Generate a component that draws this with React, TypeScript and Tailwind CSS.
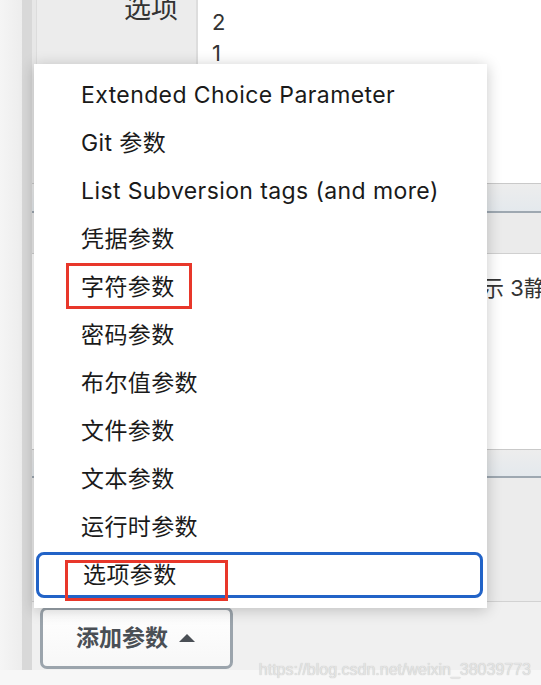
import { useState } from 'react'

const FONT = 'font-["Inter","Noto_Sans_CJK_SC",sans-serif]'

const ITEMS = [
  'Extended Choice Parameter',
  'Git 参数',
  'List Subversion tags (and more)',
  '凭据参数',
  '字符参数',
  '密码参数',
  '布尔值参数',
  '文件参数',
  '文本参数',
  '运行时参数',
  '选项参数',
]

function Separator({ height }: { height: string }) {
  return (
    <>
      <div className="h-px bg-[#c9c9c9]" />
      <div className={`${height} bg-gradient-to-b from-[#ededed] to-[#e4e9ed]`} />
      <div className="h-[2px] bg-[#9ea8b1]" />
    </>
  )
}

export default function App() {
  const [focused] = useState(ITEMS.length - 1)

  return (
    <div className={`relative w-[541px] h-[685px] overflow-hidden bg-[#f7f7f7] ${FONT}`}>
      <div className="flex h-[670px]">
        <div className="w-[22px] shrink-0 bg-gradient-to-r from-[#f5f5f5] to-[#ededed]" />
        <div className="w-[10px] shrink-0 bg-[#d8d8d8]" />
        <div className="flex-1 min-w-0 overflow-hidden flex flex-col bg-[#f0f0f0]">
          {/* 选项 row */}
          <div className="h-[183px] shrink-0 flex">
            <div className="w-[5px] shrink-0 bg-[#e7e7e7] border-r border-[#dcdcdc]" />
            <div className="w-[161px] shrink-0 bg-[#ececec] border-r-2 border-[#dddddd] text-right pr-[18px] text-[27px] leading-[30px] text-[#333] -mt-[6px]">
              选项
            </div>
            <div className="flex-1 bg-white pl-[14px] text-[22px] leading-[31px] text-[#333] pt-[7px]">
              <div>2</div>
              <div>1</div>
            </div>
          </div>

          <Separator height="h-[27px]" />
          <div className="h-[40px] bg-[#ebebeb]" />
          <div className="h-px bg-[#d0d0d0]" />

          <div className="h-[195px] bg-white pl-[186px] pt-[19px] text-[22px] leading-[30px] text-[#333] whitespace-nowrap">
            可选项数量较多时默认只显示 3静态选项
          </div>

          <Separator height="h-[26px]" />
          <div className="h-[123px] bg-[#ececec]" />
          <div className="h-px bg-[#d2d2d2]" />

          <div className="flex-1 pl-[8px] pt-[5px]">
            <button className="w-[193px] h-[62px] rounded-[7px] border-[3px] border-[#9ba4ac] bg-gradient-to-b from-white to-[#f7f7f7] flex items-center pl-[33px] gap-[11px] text-[23px] font-semibold text-[#4a4f55]">
              添加参数
              <svg width="16" height="8" viewBox="0 0 16 8">
                <path d="M0 8 L8 0 L16 8 Z" fill="#4a4f55" />
              </svg>
            </button>
          </div>
        </div>
      </div>

      {/* dropdown menu */}
      <div className="absolute left-[34px] top-[64px] w-[453px] h-[544px] bg-white shadow-[0_2px_14px_rgba(0,0,0,0.22)] pt-[7px] tracking-[0.4px]">
        {ITEMS.map((label, i) => (
          <div
            key={label}
            className={
              i === focused
                ? 'h-[46px] mt-[1px] ml-[2px] mr-[4px] flex items-center pl-[44px] rounded-[8px] border-[3px] border-[#2263c7] text-[23px] text-[#1a1a1a]'
                : 'h-[48px] flex items-center pl-[47px] text-[23px] text-[#1a1a1a]'
            }
          >
            {label}
          </div>
        ))}
      </div>

      {/* red annotation boxes */}
      <div className="absolute left-[66px] top-[263px] w-[126px] h-[46px] border-[3px] border-[#e8372a]" />
      <div className="absolute left-[65px] top-[560px] w-[163px] h-[41px] border-[3px] border-[#e8372a]" />

      {/* watermark */}
      <div className="absolute right-[10px] bottom-[6px] text-[16px] leading-[18px] text-[#e4e4e4] [text-shadow:0_0_1px_#b8b8b8] font-['Liberation_Sans',sans-serif]">
        https://blog.csdn.net/weixin_38039773
      </div>
    </div>
  )
}
